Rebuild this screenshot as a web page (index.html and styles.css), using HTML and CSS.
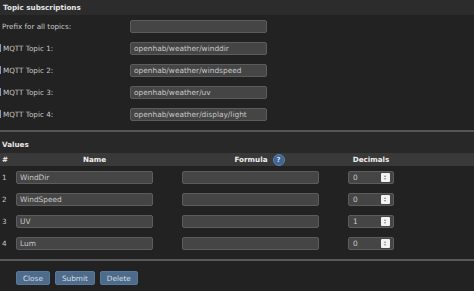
FILE: index.html
```html
<!DOCTYPE html>
<html lang="en">
<head>
  <meta charset="UTF-8" />
  <title>Topic subscriptions</title>
  <link rel="stylesheet" href="styles.css">
</head>
<body>

  <!-- Topics -->
  <div class="section-title">Topic subscriptions</div>
  <div class="topics">
    <div class="form-row">
      <label class="plain">Prefix for all topics:</label>
      <div class="field"></div>
    </div>
    <div class="form-row">
      <label><span class="mark"></span>MQTT Topic 1:</label>
      <div class="field">openhab/weather/winddir</div>
    </div>
    <div class="form-row">
      <label><span class="mark"></span>MQTT Topic 2:</label>
      <div class="field">openhab/weather/windspeed</div>
    </div>
    <div class="form-row">
      <label><span class="mark"></span>MQTT Topic 3:</label>
      <div class="field">openhab/weather/uv</div>
    </div>
    <div class="form-row">
      <label><span class="mark"></span>MQTT Topic 4:</label>
      <div class="field">openhab/weather/display/light</div>
    </div>
  </div>

  <!-- Values -->
  <div class="values">
    <div class="values-title">Values</div>
    <div class="grid head">
      <div class="num">#</div>
      <div class="center">Name</div>
      <div class="center">Formula <span class="help">?</span></div>
      <div class="center">Decimals</div>
      <div></div>
    </div>
    <div class="grid">
      <div class="num">1</div>
      <div><div class="field name">WindDir</div></div>
      <div><div class="field formula"></div></div>
      <div><div class="spin-field"><span>0</span><span class="spin"></span></div></div>
      <div></div>
    </div>
    <div class="grid">
      <div class="num">2</div>
      <div><div class="field name">WindSpeed</div></div>
      <div><div class="field formula"></div></div>
      <div><div class="spin-field"><span>0</span><span class="spin"></span></div></div>
      <div></div>
    </div>
    <div class="grid">
      <div class="num">3</div>
      <div><div class="field name">UV</div></div>
      <div><div class="field formula"></div></div>
      <div><div class="spin-field"><span>1</span><span class="spin"></span></div></div>
      <div></div>
    </div>
    <div class="grid">
      <div class="num">4</div>
      <div><div class="field name">Lum</div></div>
      <div><div class="field formula"></div></div>
      <div><div class="spin-field"><span>0</span><span class="spin"></span></div></div>
      <div></div>
    </div>
  </div>

  <div class="actions">
    <button>Close</button>
    <button>Submit</button>
    <button>Delete</button>
  </div>

</body>
</html>
```

FILE: styles.css
```css
body {
  margin: 0;
  background: #222;
  color: #c8c8c8;
  font-family: "DejaVu Sans", sans-serif;
  font-size: 7.2px;
}

.section-title {
  height: 15px;
  line-height: 15px;
  padding-left: 3px;
  background: #2c2c2c;
  color: #e6e6e6;
  font-weight: bold;
}

.form-row {
  display: flex;
  align-items: center;
  height: 22px;
}

.form-row label {
  width: 130px;
  display: flex;
  align-items: center;
}

.form-row label.plain {
  padding-left: 2px;
  width: 128px;
}

.mark {
  width: 1px;
  height: 8px;
  background: #8c9cb0;
  margin-right: 2px;
}

.field {
  box-sizing: border-box;
  width: 137px;
  height: 13px;
  line-height: 11px;
  padding: 0 3px;
  background: #454545;
  border: 1px solid #5c5c5c;
  border-radius: 2px;
  color: #c8c8c8;
  font-size: 7.4px;
  white-space: nowrap;
  overflow: hidden;
}

.values {
  margin-top: 5px;
  border-top: 2px solid #555;
}

.values-title {
  height: 21px;
  box-sizing: border-box;
  padding: 7px 0 0 2px;
  line-height: 12px;
  background: #282828;
  color: #e6e6e6;
  font-weight: bold;
}

.grid {
  display: grid;
  grid-template-columns: 12px 165px 165px 58px 1fr;
  align-items: center;
  height: 22px;
}

.grid.head {
  height: 13px;
  background: #393939;
  color: #eee;
  font-weight: bold;
}

.num {
  padding-left: 2px;
}

.center {
  display: flex;
  justify-content: center;
  align-items: center;
}

.help {
  display: inline-flex;
  justify-content: center;
  align-items: center;
  box-sizing: border-box;
  width: 12px;
  height: 12px;
  margin-left: 5px;
  border-radius: 50%;
  background: #3f6590;
  border: 1px solid #5b82ad;
  color: #d4deea;
  font-size: 7px;
}

.field.name {
  margin-left: 4px;
}

.field.formula {
  margin-left: 5px;
}

.spin-field {
  box-sizing: border-box;
  display: flex;
  align-items: center;
  justify-content: space-between;
  width: 46px;
  height: 13px;
  margin-left: 6px;
  padding: 0 3px 0 4px;
  background: #454545;
  border: 1px solid #5c5c5c;
  border-radius: 2px;
  font-size: 7.4px;
}

.spin {
  position: relative;
  width: 9px;
  height: 9px;
  background: #f2f2f2;
  border-radius: 1px;
}

.spin::before,
.spin::after {
  content: "";
  position: absolute;
  left: 3px;
  border-left: 1.5px solid transparent;
  border-right: 1.5px solid transparent;
}

.spin::before {
  top: 2px;
  border-bottom: 2px solid #888;
}

.spin::after {
  bottom: 2px;
  border-top: 2px solid #888;
}

.actions {
  margin-top: 5px;
  border-top: 2px solid #5a5a5a;
  padding: 10px 16px;
  display: flex;
  gap: 5px;
}

.actions button {
  height: 14px;
  padding: 0 6px;
  background: #4d6b8b;
  border: 1px solid #58789a;
  border-radius: 2px;
  color: #d5dde6;
  font-family: "DejaVu Sans", sans-serif;
  font-size: 7.3px;
}
```
